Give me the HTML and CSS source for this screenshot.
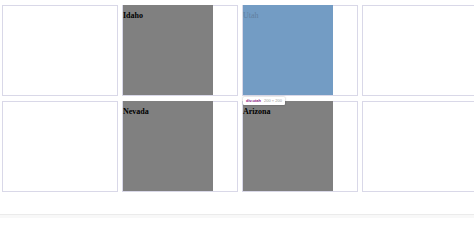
FILE: index.html
```html
<!DOCTYPE html>
<html>
<head>
<meta charset="utf-8">
<link rel="stylesheet" href="styles.css">
</head>
<body>
<div class="page">
  <div class="grid">
    <div class="card"></div>
    <div class="card"><div class="state gray"><span class="name">Idaho</span></div></div>
    <div class="card"><div class="state blue"><span class="name light">Utah</span></div>
      <div class="tip"><span class="sel">div.utah</span><span class="dim">200 × 200</span></div>
    </div>
    <div class="card"></div>
    <div class="card"></div>
    <div class="card"><div class="state gray"><span class="name">Nevada</span></div></div>
    <div class="card"><div class="state gray"><span class="name">Arizona</span></div></div>
    <div class="card"></div>
  </div>
  <div class="spacer"></div>
  <div class="footer"></div>
</div>
</body>
</html>
```
FILE: styles.css
```css
html, body { margin: 0; padding: 0; background: #fff; overflow: hidden; }
.page { width: 474px; height: 218px; display: flex; flex-direction: column; }
.grid {
  display: grid;
  grid-template-columns: repeat(4, 116px);
  grid-auto-rows: 91px;
  column-gap: 4px;
  row-gap: 5px;
  padding: 5px 0 0 2px;
}
.card {
  position: relative;
  border: 1px solid #d9d8e8;
  background: #fff;
}
.state {
  width: 90px;
  height: 90px;
  margin-top: -1px;
  box-sizing: border-box;
  padding: 6px 0 0 0;
}
.gray { background: #808080; }
.blue { background: #739cc4; }
.name {
  display: block;
  font-family: "Liberation Serif", serif;
  font-weight: bold;
  font-size: 8px;
  line-height: 9px;
  color: #000;
}
.name.light { font-weight: normal; color: #62809f; }
.tip {
  position: absolute;
  left: 0;
  top: 91px;
  height: 8px;
  padding: 0 3px;
  background: #fff;
  box-shadow: 0 0 2px rgba(0,0,0,0.35);
  border-radius: 1px;
  display: flex;
  align-items: center;
  gap: 3px;
  font-family: "Liberation Sans", sans-serif;
  font-size: 4px;
  line-height: 8px;
  z-index: 2;
  white-space: nowrap;
}
.sel { color: #881280; font-weight: bold; }
.dim { color: #999; }
.spacer { flex: 1; }
.footer { height: 3px; border-top: 1px solid #ebebeb; background: #f8f8f8; }
```
